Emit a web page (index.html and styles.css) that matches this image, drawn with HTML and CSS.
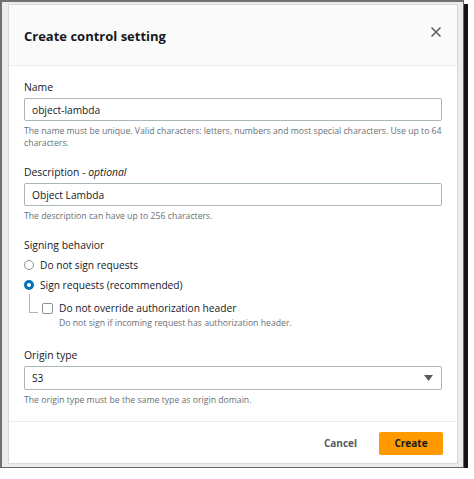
FILE: index.html
```html
<!DOCTYPE html>
<html>
<head>
<meta charset="utf-8">
<link rel="stylesheet" href="styles.css">
</head>
<body>
<div class="frame">
  <div class="modal">
    <div class="header">
      <h1 class="title">Create control setting</h1>
      <svg class="close" width="10" height="10" viewBox="0 0 10 10"><path d="M0.5 0.5 L9.5 9.5 M9.5 0.5 L0.5 9.5" stroke="#545b64" stroke-width="1.5" fill="none"/></svg>
    </div>
    <div class="body">
      <div class="field">
        <div class="label">Name</div>
        <div class="input">object-lambda</div>
        <div class="help">The name must be unique. Valid characters: letters, numbers and most special characters. Use up to 64 characters.</div>
      </div>
      <div class="field">
        <div class="label">Description - <i>optional</i></div>
        <div class="input">Object Lambda</div>
        <div class="help">The description can have up to 256 characters.</div>
      </div>
      <div class="field signing">
        <div class="label">Signing behavior</div>
        <div class="radio-row"><span class="radio"></span><span class="opt">Do not sign requests</span></div>
        <div class="radio-row"><span class="radio on"></span><span class="opt">Sign requests (recommended)</span></div>
        <div class="sub">
          <span class="connector"></span>
          <div class="check-row"><span class="checkbox"></span><span class="opt">Do not override authorization header</span></div>
          <div class="help sub-help">Do not sign if incoming request has authorization header.</div>
        </div>
      </div>
      <div class="field">
        <div class="label">Origin type</div>
        <div class="input select">S3<svg class="caret" width="9" height="6" viewBox="0 0 9 6"><path d="M0 0 H9 L4.5 6 Z" fill="#545b64"/></svg></div>
        <div class="help">The origin type must be the same type as origin domain.</div>
      </div>
    </div>
    <div class="footer">
      <span class="cancel">Cancel</span>
      <span class="create">Create</span>
    </div>
  </div>
</div>
</body>
</html>
```
FILE: styles.css
```css
html, body { margin: 0; padding: 0; background: #ffffff; }
body { font-family: "Open Sans", "Noto Sans", sans-serif; color: #16191f; }
.frame {
  box-sizing: border-box;
  width: 464px;
  height: 468px;
  background: #ececec;
  border-top: 2px solid #707070;
  border-left: 2px solid #707070;
  border-right: 1px solid #666;
  border-bottom: 1px solid #666;
  box-shadow: 4px 4px 0 #151515;
  padding: 2px 0 0 6px;
}
.modal {
  box-sizing: border-box;
  width: 450px;
  height: 460px;
  background: #fff;
  border: 1px solid #d5dbdb;
  display: flex;
  flex-direction: column;
}
.header {
  flex-shrink: 0;
  height: 60px;
  background: #fafafa;
  border-bottom: 1px solid #eaeded;
  display: flex;
  justify-content: space-between;
  align-items: flex-start;
  padding: 0 15px;
}
.title { margin: 22px 0 0; font-size: 13px; font-weight: 700; line-height: 18px; }
.close { margin-top: 22px; margin-right: 1px; }
.body { padding: 13px 15px 0; flex: 1; }
.field { margin-bottom: 15px; }
.field.signing { margin-bottom: 18px; }
.label { font-size: 10.4px; line-height: 16px; margin-bottom: 3px; }
.input {
  box-sizing: border-box;
  height: 23px;
  border: 1px solid #aab7b8;
  border-radius: 2px;
  font-size: 10.2px;
  padding: 0 7px;
  color: #16191f;
  display: flex;
  align-items: center;
  justify-content: space-between;
}
.select { height: 24px; padding-right: 8px; }
.help { font-size: 8.7px; line-height: 12px; color: #687078; margin-top: 4px; }
.radio-row { display: flex; align-items: center; height: 20px; }
.signing .label { margin-bottom: 2px; }
.radio {
  width: 10px; height: 10px; border: 1px solid #879596; border-radius: 50%;
  box-sizing: border-box; margin: 0 6px 0 0;
}
.radio.on { border: 3px solid #0073bb; }
.opt { font-size: 10.2px; line-height: 14px; }
.sub { position: relative; padding-left: 18px; }
.connector {
  position: absolute; left: 5px; top: -5px; width: 8px; height: 18px;
  border-left: 1px solid #aab7b8; border-bottom: 1px solid #aab7b8;
}
.check-row { display: flex; align-items: center; height: 18px; margin-top: 4px; }
.checkbox {
  width: 11px; height: 11px; border: 1px solid #879596; border-radius: 2px;
  box-sizing: border-box; margin-right: 6px;
}
.sub-help { margin-top: 0; padding-left: 17px; }
.caret { display: block; }
.footer {
  flex-shrink: 0;
  height: 43px;
  margin-top: auto;
  border-top: 1px solid #eaeded;
  display: flex;
  align-items: center;
  justify-content: flex-end;
  padding: 0 14px;
  box-sizing: border-box;
}
.cancel { font-size: 10px; font-weight: 700; color: #545b64; margin-right: 22px; }
.create {
  background: #ff9900; font-size: 10px; font-weight: 700; color: #16191f;
  width: 64px; text-align: center;
  height: 23px; line-height: 23px; border-radius: 2px;
}
```
